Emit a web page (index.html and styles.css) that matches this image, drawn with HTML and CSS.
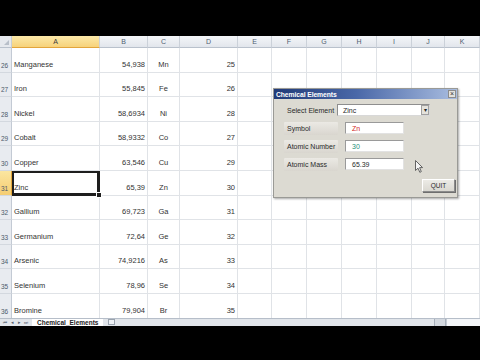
FILE: index.html
```html
<!DOCTYPE html>
<html>
<head>
<meta charset="utf-8">
<link rel="stylesheet" href="styles.css">
</head>
<body>
<div class="screen">
  <div class="letterbox top"></div>
  <div class="sheet">
    <div class="grid">
      <div class="corner"><span class="tri"></span></div>
      <div class="ch sel">A</div><div class="ch">B</div><div class="ch">C</div><div class="ch">D</div><div class="ch">E</div><div class="ch">F</div><div class="ch">G</div><div class="ch">H</div><div class="ch">I</div><div class="ch">J</div><div class="ch">K</div>

      <div class="rh">26</div><div class="c">Manganese</div><div class="c num">54,938</div><div class="c mid">Mn</div><div class="c num">25</div><div class="c"></div><div class="c"></div><div class="c"></div><div class="c"></div><div class="c"></div><div class="c"></div><div class="c"></div>
      <div class="rh">27</div><div class="c">Iron</div><div class="c num">55,845</div><div class="c mid">Fe</div><div class="c num">26</div><div class="c"></div><div class="c"></div><div class="c"></div><div class="c"></div><div class="c"></div><div class="c"></div><div class="c"></div>
      <div class="rh">28</div><div class="c">Nickel</div><div class="c num">58,6934</div><div class="c mid">Ni</div><div class="c num">28</div><div class="c"></div><div class="c"></div><div class="c"></div><div class="c"></div><div class="c"></div><div class="c"></div><div class="c"></div>
      <div class="rh">29</div><div class="c">Cobalt</div><div class="c num">58,9332</div><div class="c mid">Co</div><div class="c num">27</div><div class="c"></div><div class="c"></div><div class="c"></div><div class="c"></div><div class="c"></div><div class="c"></div><div class="c"></div>
      <div class="rh">30</div><div class="c">Copper</div><div class="c num">63,546</div><div class="c mid">Cu</div><div class="c num">29</div><div class="c"></div><div class="c"></div><div class="c"></div><div class="c"></div><div class="c"></div><div class="c"></div><div class="c"></div>
      <div class="rh sel">31</div><div class="c active">Zinc</div><div class="c num">65,39</div><div class="c mid">Zn</div><div class="c num">30</div><div class="c"></div><div class="c"></div><div class="c"></div><div class="c"></div><div class="c"></div><div class="c"></div><div class="c"></div>
      <div class="rh">32</div><div class="c">Gallium</div><div class="c num">69,723</div><div class="c mid">Ga</div><div class="c num">31</div><div class="c"></div><div class="c"></div><div class="c"></div><div class="c"></div><div class="c"></div><div class="c"></div><div class="c"></div>
      <div class="rh">33</div><div class="c">Germanium</div><div class="c num">72,64</div><div class="c mid">Ge</div><div class="c num">32</div><div class="c"></div><div class="c"></div><div class="c"></div><div class="c"></div><div class="c"></div><div class="c"></div><div class="c"></div>
      <div class="rh">34</div><div class="c">Arsenic</div><div class="c num">74,9216</div><div class="c mid">As</div><div class="c num">33</div><div class="c"></div><div class="c"></div><div class="c"></div><div class="c"></div><div class="c"></div><div class="c"></div><div class="c"></div>
      <div class="rh">35</div><div class="c">Selenium</div><div class="c num">78,96</div><div class="c mid">Se</div><div class="c num">34</div><div class="c"></div><div class="c"></div><div class="c"></div><div class="c"></div><div class="c"></div><div class="c"></div><div class="c"></div>
      <div class="rh">36</div><div class="c">Bromine</div><div class="c num">79,904</div><div class="c mid">Br</div><div class="c num">35</div><div class="c"></div><div class="c"></div><div class="c"></div><div class="c"></div><div class="c"></div><div class="c"></div><div class="c"></div>
    </div>

    <div class="dlg">
      <div class="dlg-title">
        <span class="dlg-name">Chemical Elements</span>
        <span class="dlg-close">×</span>
      </div>
      <div class="dlg-body">
        <div class="frow">
          <span class="plain">Select Element</span>
          <div class="combo"><span class="combo-val">Zinc</span><span class="combo-btn">▾</span></div>
        </div>
        <div class="frow">
          <span class="lbl">Symbol</span>
          <div class="tb red">Zn</div>
        </div>
        <div class="frow">
          <span class="lbl">Atomic Number</span>
          <div class="tb teal">30</div>
        </div>
        <div class="frow">
          <span class="lbl">Atomic Mass</span>
          <div class="tb">65.39</div>
        </div>
        <div class="brow"><span class="btn">QUIT</span></div>
      </div>
    </div>

    <svg class="cursor" width="8" height="13" viewBox="0 0 8 13">
      <path d="M0.5 0.5 L0.5 10.5 L3 8.2 L4.8 12.3 L6.3 11.6 L4.6 7.6 L7.6 7.6 Z" fill="#f4f4f4" stroke="#555" stroke-width="0.9"/>
    </svg>
  </div>

  <div class="tabs">
    <div class="nav">
      <span class="nb">⏮</span><span class="nb">◂</span><span class="nb">▸</span><span class="nb">⏭</span>
    </div>
    <span class="tab">Chemical_Elements</span>
    <span class="newsheet"></span>
    <span class="spacer"></span>
    <span class="split"></span>
    <span class="hscroll"></span>
  </div>
  <div class="letterbox bottom"></div>
</div>
</body>
</html>
```

FILE: styles.css
```css
* { box-sizing: border-box; }
html, body { margin: 0; padding: 0; background: #000; }
.screen {
  width: 480px;
  height: 360px;
  display: flex;
  flex-direction: column;
  overflow: hidden;
  font-family: "Liberation Sans", Arial, sans-serif;
}
.letterbox { background: #000; }
.letterbox.top { height: 36px; flex: none; }
.letterbox.bottom { flex: 1; }

.sheet {
  position: relative;
  height: 282px;
  flex: none;
  overflow: hidden;
  background: #fff;
}
.grid {
  display: grid;
  grid-template-columns: 12px 88px 48px 32px 58px 34px 35px 35px 35px 35px 33px 35px;
  grid-template-rows: 12px repeat(11, 24.6px);
}
.corner {
  background: #e6e9ee;
  border-right: 1px solid #c8ced6;
  border-bottom: 1px solid #b9c1cc;
  position: relative;
}
.tri {
  position: absolute;
  right: 2px;
  bottom: 2px;
  width: 0; height: 0;
  border-left: 5px solid transparent;
  border-bottom: 5px solid #b8bfc9;
}
.ch {
  background: linear-gradient(#f4f6f9, #e2e6ec);
  border-right: 1px solid #cbd1d9;
  border-bottom: 1px solid #b9c1cc;
  color: #4f5d70;
  font-size: 7px;
  display: flex;
  align-items: center;
  justify-content: center;
}
.ch.sel {
  background: linear-gradient(#fbe9a9, #f7d27a);
  border-bottom: 1px solid #e2a53c;
  color: #3a3a3a;
}
.rh {
  background: #e8ebf0;
  border-right: 1px solid #c3cad4;
  border-bottom: 1px solid #d3d8df;
  color: #4d5a6b;
  font-size: 6.5px;
  display: flex;
  align-items: flex-end;
  justify-content: flex-start;
  padding: 0 0 3px 1px;
}
.rh.sel {
  background: linear-gradient(#fbe6a0, #f5cd72);
  border-right: 1px solid #e2a53c;
}
.c {
  border-right: 1px solid #e0e3e7;
  border-bottom: 1px solid #e0e3e7;
  color: #333333;
  font-size: 7.5px;
  display: flex;
  align-items: flex-end;
  padding: 0 2px 3px 2px;
  white-space: nowrap;
}
.c.num { justify-content: flex-end; padding-right: 2px; }
.c.mid { justify-content: center; }
.c.active {
  position: relative;
  box-shadow: inset 0 0 0 2px #1e1e1e;
  border-color: #1e1e1e;
}
.c.active::after {
  content: "";
  position: absolute;
  right: -3px;
  bottom: -3px;
  width: 4px;
  height: 4px;
  background: #1e1e1e;
  border: 1px solid #fff;
}

/* dialog */
.dlg {
  position: absolute;
  left: 273px;
  top: 52px;
  width: 185px;
  height: 110px;
  background: #dcdad2;
  border: 1px solid #9a9a96;
  box-shadow: 1px 1px 2px rgba(0,0,0,0.35);
  display: flex;
  flex-direction: column;
  font-size: 7px;
  color: #2a2a2a;
}
.dlg-title {
  height: 10px;
  background: linear-gradient(90deg, #203a78 0%, #4a68a8 45%, #a9bde0 100%);
  display: flex;
  align-items: center;
  justify-content: space-between;
  padding: 0 1px 0 2px;
}
.dlg-name {
  color: #fff;
  font-weight: bold;
  font-size: 6.8px;
  letter-spacing: -0.1px;
}
.dlg-close {
  width: 8px;
  height: 8px;
  background: #e4e2dc;
  border: 1px solid #8c8c8c;
  color: #333;
  font-size: 7px;
  line-height: 6px;
  text-align: center;
}
.dlg-body {
  flex: 1;
  display: flex;
  flex-direction: column;
  padding: 5px 2px 0 10px;
  gap: 6px;
}
.frow {
  display: flex;
  align-items: center;
  height: 12px;
}
.plain {
  width: 53px;
  padding-left: 3px;
}
.combo {
  width: 93px;
  height: 12px;
  background: #fff;
  border: 1px solid #8e8e8e;
  border-right-color: #d8d8d8;
  border-bottom-color: #d8d8d8;
  display: flex;
  align-items: center;
  justify-content: space-between;
  padding-left: 5px;
}
.combo-btn {
  width: 8px;
  height: 10px;
  background: #e4e2dc;
  border: 1px solid #a0a0a0;
  font-size: 6px;
  line-height: 8px;
  text-align: center;
  color: #222;
}
.lbl {
  width: 54px;
  height: 13px;
  background: linear-gradient(#ebe9e4, #d9d6cf);
  border-radius: 1px;
  display: flex;
  align-items: center;
  padding-left: 3px;
}
.tb {
  margin-left: 7px;
  width: 59px;
  height: 12px;
  background: #fff;
  border: 1px solid #9a9a9a;
  border-right-color: #e2e2e2;
  border-bottom-color: #e2e2e2;
  display: flex;
  align-items: center;
  padding-left: 6px;
}
.tb.red { color: #d21f1f; }
.tb.teal { color: #1f8f7a; }
.brow {
  display: flex;
  justify-content: flex-end;
  margin-top: 3px;
}
.btn {
  width: 33px;
  height: 13px;
  background: linear-gradient(#ecebe6, #dad8d1);
  border: 1px solid #8b8b8b;
  border-top-color: #fff;
  border-left-color: #fff;
  box-shadow: 1px 1px 0 #6e6e6e;
  display: flex;
  align-items: center;
  justify-content: center;
  font-size: 6.5px;
}
.cursor {
  position: absolute;
  left: 415px;
  top: 124px;
}

/* sheet tabs */
.tabs {
  height: 8px;
  flex: none;
  background: #e1e5ea;
  border-top: 1px solid #b6bec9;
  display: flex;
  align-items: stretch;
  font-size: 6.5px;
}
.nav {
  display: flex;
  gap: 1px;
  padding-left: 2px;
  width: 32px;
}
.nb {
  width: 6px;
  font-size: 4.5px;
  line-height: 7px;
  color: #55606e;
  text-align: center;
}
.tab {
  background: #fff;
  font-weight: bold;
  color: #222;
  padding: 0 5px;
  line-height: 7px;
  font-size: 6.5px;
}
.newsheet {
  width: 7px;
  height: 6px;
  margin: 0 0 0 5px;
  border: 1px solid #9aa3ae;
  background: #eef1f5;
}
.spacer { flex: 1; }
.split {
  width: 12px;
  border-left: 1px solid #a7afba;
  border-right: 1px solid #a7afba;
  background: #d3d8df;
}
.hscroll {
  width: 34px;
  background: #f3f5f8;
  border-left: 1px solid #c3cad3;
}
```
